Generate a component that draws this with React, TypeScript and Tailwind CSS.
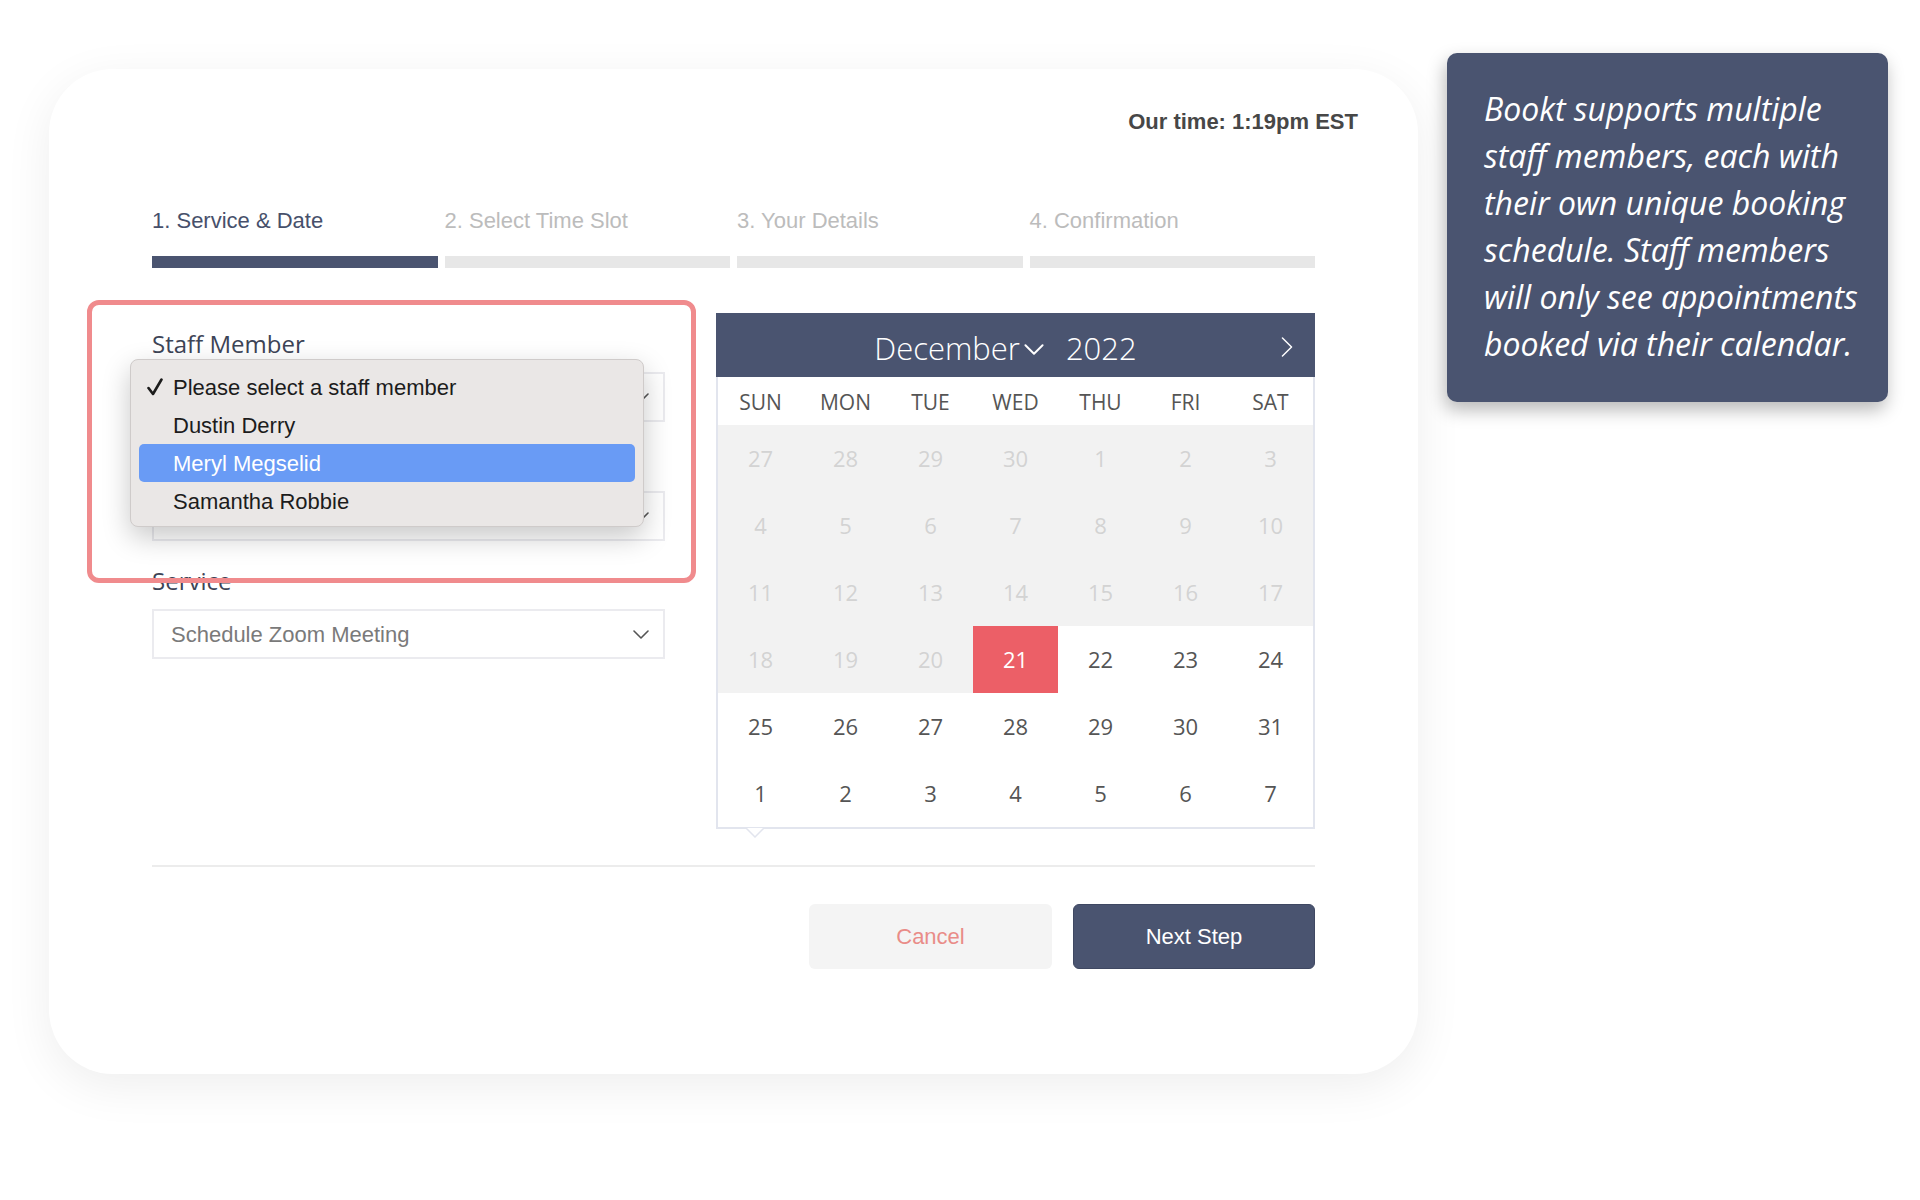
const steps = ["1. Service & Date", "2. Select Time Slot", "3. Your Details", "4. Confirmation"];

const weekdays = ["SUN", "MON", "TUE", "WED", "THU", "FRI", "SAT"];

const weeks = [
  [27, 28, 29, 30, 1, 2, 3],
  [4, 5, 6, 7, 8, 9, 10],
  [11, 12, 13, 14, 15, 16, 17],
  [18, 19, 20, 21, 22, 23, 24],
  [25, 26, 27, 28, 29, 30, 31],
  [1, 2, 3, 4, 5, 6, 7],
];

const staff = ["Please select a staff member", "Dustin Derry", "Meryl Megselid", "Samantha Robbie"];

const tip = [
  "Bookt supports multiple",
  "staff members, each with",
  "their own unique booking",
  "schedule. Staff members",
  "will only see appointments",
  "booked via their calendar.",
];

function Chevron({ className }: { className?: string }) {
  return (
    <svg viewBox="0 0 16 9" className={className} fill="none">
      <path d="M1 1l7 7 7-7" stroke="currentColor" strokeWidth="1.6" strokeLinecap="round" strokeLinejoin="round" />
    </svg>
  );
}

function SelectBox({ text }: { text?: string }) {
  return (
    <div className="h-[50px] border-2 border-[#ebebef] bg-white flex items-center justify-between pl-[17px] pr-[14px]">
      <span className="text-[22px] text-[#7a7a7a] font-['Liberation_Sans',Arial,sans-serif]">{text}</span>
      <Chevron className="w-[16px] h-[9px] text-[#555]" />
    </div>
  );
}

function Label({ text }: { text?: string }) {
  return (
    <div className="h-[32px] text-[24px] leading-[32px] text-[#3d4456] font-['Open_Sans',sans-serif] mb-[12px]">{text}</div>
  );
}

export default function App() {
  return (
    <div className="w-[1920px] h-[1200px] bg-white flex items-start font-['Liberation_Sans',Arial,sans-serif]">
      {/* main card */}
      <div className="ml-[49px] mt-[69px] w-[1369px] h-[1005px] rounded-[64px] bg-white shadow-[0_12px_48px_rgba(0,0,0,0.07)] flex flex-col">
        <div className="pt-[40px] pr-[60px] flex justify-end">
          <span className="text-[22px] leading-[26px] font-bold text-[#474747]">Our time: 1:19pm EST</span>
        </div>

        <div className="px-[103px] flex flex-col">
          {/* steps */}
          <div className="mt-[73px] grid grid-cols-4 gap-x-[7px]">
            {steps.map((s, i) => (
              <div key={s} className="flex flex-col">
                <span className={`text-[22px] leading-[26px] ${i === 0 ? "text-[#47506b]" : "text-[#bcbcbc]"}`}>{s}</span>
                <div className={`mt-[22px] h-[12px] ${i === 0 ? "bg-[#4a5470]" : "bg-[#e7e7e7]"}`} />
              </div>
            ))}
          </div>

          {/* form + calendar */}
          <div className="mt-[45px] flex items-start gap-[51px]">
            <div className="relative w-[513px] pt-[15px]">
              <Label text="Staff Member" />
              <SelectBox />
              <div className="mt-[25px]">
                <Label />
              </div>
              <SelectBox />
              <div className="mt-[24px]">
                <Label text="Service" />
              </div>
              <SelectBox text="Schedule Zoom Meeting" />

              {/* highlight frame */}
              <div className="absolute left-[-65px] top-[-13px] w-[609px] h-[283px] border-[5px] border-[#f08b8d] rounded-[12px] pointer-events-none" />

              {/* open dropdown */}
              <div className="absolute left-[-22px] top-[46px] w-[514px] h-[168px] rounded-[8px] bg-[#eae7e6] border border-[#cfcbca] shadow-[0_10px_28px_rgba(0,0,0,0.22)] px-[8px] pt-[8px]">
                {staff.map((n, i) => (
                  <div
                    key={n}
                    className={`h-[38px] flex items-center rounded-[5px] ${i === 2 ? "bg-[#699bf5] text-white" : "text-[#1c1c1c]"}`}
                  >
                    <span className="w-[24px] flex">
                      {i === 0 && (
                        <svg viewBox="0 0 16 18" className="w-[16px] h-[18px] ml-[8px]" fill="none">
                          <path d="M1.5 10l4.5 6L14.5 1.5" stroke="#1c1c1c" strokeWidth="2.6" strokeLinecap="round" strokeLinejoin="round" />
                        </svg>
                      )}
                    </span>
                    <span className="ml-[10px] text-[22px]">{n}</span>
                  </div>
                ))}
              </div>
            </div>

            {/* calendar */}
            <div className="relative w-[599px] font-['Open_Sans',sans-serif]">
              <div className="h-[64px] bg-[#4a5470] flex items-center justify-center pr-[20px] pt-[6px] text-white relative">
                <span className="text-[31px] font-light">December</span>
                <Chevron className="w-[20px] h-[11px] ml-[4px] mt-[2px] text-white" />
                <span className="text-[31px] font-light ml-[22px]">2022</span>
                <svg viewBox="0 0 12 22" className="absolute right-[22px] top-[24px] w-[12px] h-[20px]" fill="none">
                  <path d="M1 1l10 10L1 21" stroke="white" strokeWidth="1.6" strokeLinecap="round" strokeLinejoin="round" />
                </svg>
              </div>
              <div className="border-x-2 border-b-2 border-[#e2e5ee]">
                <div className="h-[48px] grid grid-cols-7 bg-white pt-[4px]">
                  {weekdays.map((d) => (
                    <div key={d} className="flex items-center justify-center text-[21px] text-[#555]">{d}</div>
                  ))}
                </div>
                <div className="grid grid-cols-7">
                  {weeks.map((w, r) =>
                    w.map((d, c) => {
                      const off = r < 3 || (r === 3 && c < 3);
                      const sel = r === 3 && c === 3;
                      return (
                        <div
                          key={`${r}-${c}`}
                          className={`h-[67px] flex items-center justify-center text-[22px] ${
                            sel ? "bg-[#ec5f67] text-white" : off ? "bg-[#f2f2f2] text-[#d3d3d3]" : "bg-white text-[#555]"
                          }`}
                        >
                          {d}
                        </div>
                      );
                    })
                  )}
                </div>
              </div>
              <svg viewBox="0 0 20 10" className="absolute left-[29px] bottom-[-9px] w-[20px] h-[10px]" fill="none">
                <path d="M1 0l9 9 9-9" fill="white" stroke="#e2e5ee" strokeWidth="1.5" />
              </svg>
            </div>
          </div>

          <div className="mt-[36px] h-[2px] bg-[#ececec]" />

          <div className="mt-[37px] flex justify-end gap-[21px]">
            <button className="w-[243px] h-[65px] rounded-[6px] bg-[#f4f4f4] text-[22px] text-[#e98c88]">Cancel</button>
            <button className="w-[242px] h-[65px] rounded-[6px] bg-[#4a5470] border border-[#3f4862] text-[22px] text-white">Next Step</button>
          </div>
        </div>
      </div>

      {/* annotation */}
      <div className="ml-[29px] mt-[53px] w-[441px] h-[349px] rounded-[10px] bg-[#4a5470] shadow-[-2px_8px_18px_rgba(0,0,0,0.28)] pl-[37px] pt-[32px]">
        {tip.map((l) => (
          <div key={l} className="text-[32px] leading-[47px] italic text-white whitespace-nowrap font-['Open_Sans',sans-serif]">{l}</div>
        ))}
      </div>
    </div>
  );
}
